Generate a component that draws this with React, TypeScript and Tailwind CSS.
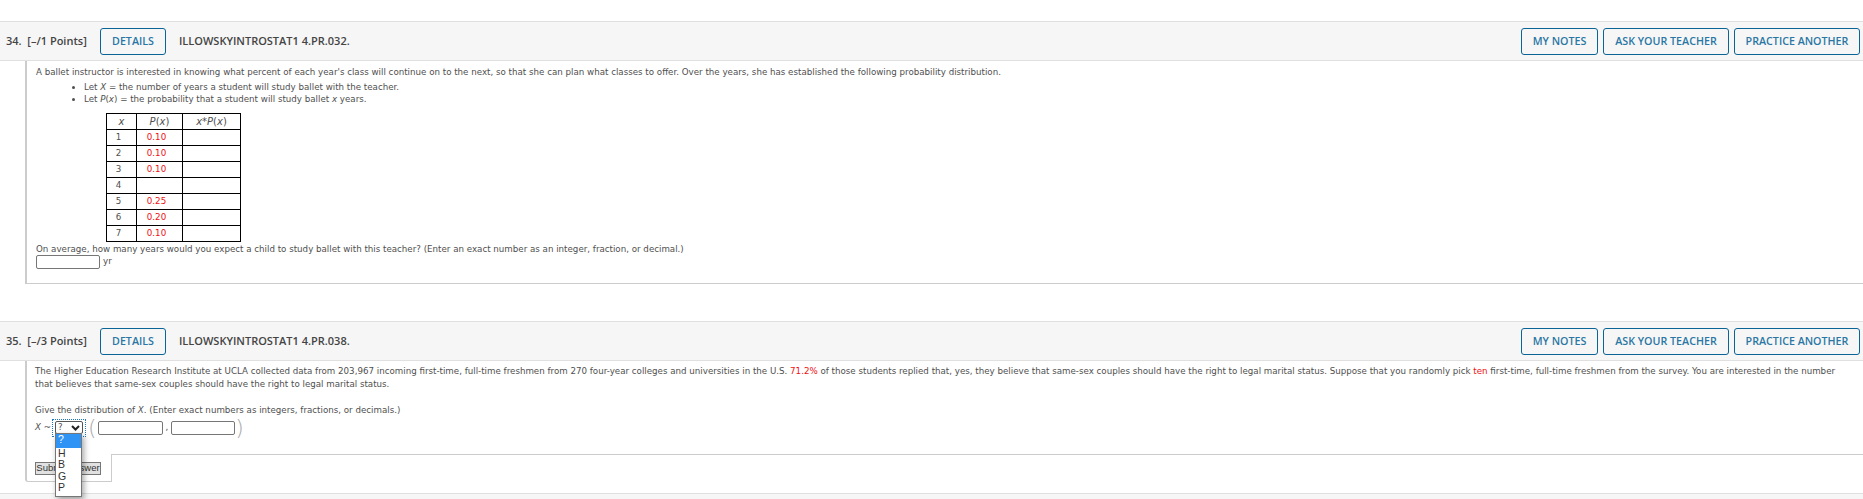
const headFont = "font-['Open_Sans',sans-serif]";

const ROWS = [
  { x: "1", p: "0.10" },
  { x: "2", p: "0.10" },
  { x: "3", p: "0.10" },
  { x: "4", p: "" },
  { x: "5", p: "0.25" },
  { x: "6", p: "0.20" },
  { x: "7", p: "0.10" },
];

const HeadButton = ({ label, className }: { label: string; className: string }) => (
  <button className={`flex h-[27px] items-center justify-center rounded-[3px] border border-[#0a6496] bg-transparent text-[10.7px] font-semibold text-[#2a76a4] ${className}`}>
    {label}
  </button>
);

const QuestionHead = ({ num, points, code }: { num: string; points: string; code: string }) => (
  <div className={`flex h-[40px] items-center border-y border-[#e0e0e0] bg-[#f6f6f6] pl-[6px] pr-[3px] ${headFont}`}>
    <span className="w-[94px] whitespace-pre text-[11px] font-semibold text-[#444444]">
      {num}  [–/{points} Points]
    </span>
    <HeadButton label="DETAILS" className="w-[66px]" />
    <span className="ml-[13px] flex-1 text-[11px] font-semibold text-[#444444]">{code}</span>
    <div className="flex gap-[5px]">
      <HeadButton label="MY NOTES" className="w-[77px]" />
      <HeadButton label="ASK YOUR TEACHER" className="w-[126px]" />
      <HeadButton label="PRACTICE ANOTHER" className="w-[126px]" />
    </div>
  </div>
);

const Blank = ({ w }: { w: string }) => (
  <span className={`inline-block h-[14px] rounded-[2px] border border-[#767676] bg-white ${w}`} />
);

const HeadCell = ({ children, w }: { children: React.ReactNode; w: string }) => (
  <td className={`h-[16px] border border-black p-0 text-center text-[10px] leading-none ${w}`}>{children}</td>
);

const Cell = ({ children }: { children?: React.ReactNode }) => (
  <td className="h-[16px] border border-black p-0 pr-[6px] text-center leading-none">{children}</td>
);

const App = () => {
  return (
    <div className="h-[499px] w-[1863px] overflow-hidden bg-white font-['DejaVu_Sans',sans-serif] text-[8.7px] text-[#4f4f4f]">
      <div className="h-[21px]" />
      <QuestionHead num="34." points="1" code="ILLOWSKYINTROSTAT1 4.PR.032." />

      {/* Question 34 */}
      <div className="ml-[25px] h-[223px] border-b border-l-2 border-[#cccccc] pl-[9px] pt-[5px]">
        <p className="leading-[12px]">
          A ballet instructor is interested in knowing what percent of each year's class will continue on to the next, so that she can plan what classes to offer. Over the years, she has established the following probability distribution.
        </p>
        <ul className="ml-[48px] mt-[4px] list-disc pl-0 leading-[11.5px]">
          <li>Let <i>X</i> = the number of years a student will study ballet with the teacher.</li>
          <li>Let <i>P</i>(<i>x</i>) = the probability that a student will study ballet <i>x</i> years.</li>
        </ul>
        <table className="ml-[70px] mt-[8px] border-collapse">
          <tbody>
            <tr>
              <HeadCell w="w-[30px]"><i>x</i></HeadCell>
              <HeadCell w="w-[46px]"><i>P</i>(<i>x</i>)</HeadCell>
              <HeadCell w="w-[58px]"><i>x</i>*<i>P</i>(<i>x</i>)</HeadCell>
            </tr>
            {ROWS.map((r) => (
              <tr key={r.x}>
                <Cell>{r.x}</Cell>
                <Cell><span className="text-[#ee1111]">{r.p}</span></Cell>
                <Cell />
              </tr>
            ))}
          </tbody>
        </table>
        <p className="mt-[1px] leading-[12px]">
          On average, how many years would you expect a child to study ballet with this teacher? (Enter an exact number as an integer, fraction, or decimal.)
        </p>
        <div className="flex items-center gap-[3px]">
          <Blank w="w-[64px]" />
          <span>yr</span>
        </div>
      </div>

      <div className="h-[37px]" />
      <QuestionHead num="35." points="3" code="ILLOWSKYINTROSTAT1 4.PR.038." />

      {/* Question 35 */}
      <div className="relative ml-[25px] h-[121px]">
        <div className="h-[121px] w-[87px] rounded-bl-[3px] border-b border-l-2 border-[#cccccc]" />
        <div className="absolute left-[10px] top-[4px] w-[1815px]">
          <p className="leading-[12.8px]">
            The Higher Education Research Institute at UCLA collected data from 203,967 incoming first-time, full-time freshmen from 270 four-year colleges and universities in the U.S. <span className="text-[#ee1111]">71.2%</span> of those students replied that, yes, they believe that same-sex couples should have the right to legal marital status. Suppose that you randomly pick <span className="text-[#ee1111]">ten</span> first-time, full-time freshmen from the survey. You are interested in the number that believes that same-sex couples should have the right to legal marital status.
          </p>
          <p className="mt-[13px] leading-[12px]">
            Give the distribution of <i>X</i>. (Enter exact numbers as integers, fractions, or decimals.)
          </p>
          <div className="mt-[3px] flex h-[18px] items-center">
            <span className="w-[17px] whitespace-pre"><i>X</i> ~</span>
            <span className="flex h-[18px] w-[34px] items-center justify-center border border-dotted border-[#1a78c2]">
              <span className="flex h-[13px] w-[28px] items-center justify-between rounded-[2px] border border-[#555555] px-[2px]">
                ?
                <svg width="9" height="6" viewBox="0 0 9 6"><path d="M1 1l3.5 3.5L8 1" fill="none" stroke="#222222" strokeWidth="2" /></svg>
              </span>
            </span>
            <span className="ml-[2px] text-[22px] font-light leading-none text-[#aaaaaa]">(</span>
            <Blank w="w-[65px] ml-[1px]" />
            <span className="mx-[3px]">,</span>
            <Blank w="w-[64px]" />
            <span className="text-[22px] font-light leading-none text-[#aaaaaa]">)</span>
          </div>
        </div>
        <div className="absolute bottom-0 left-[86px] right-0 top-[93px] border-l border-t border-[#cccccc]" />
        <button className="absolute left-[10px] top-[101px] flex h-[13px] w-[66px] items-center justify-center border border-[#777777] bg-[#e1e1e1] font-['Liberation_Sans',sans-serif] text-[9.5px] text-[#333333]">
          Submit Answer
        </button>
        {/* open dropdown of the select */}
        <ul className="absolute left-[30px] top-[72px] z-10 w-[27px] border border-[#767676] bg-white pb-[3px] font-['Liberation_Sans',sans-serif] text-[10.5px] leading-[11.3px] text-[#333333] shadow-[2px_3px_6px_rgba(0,0,0,0.35)]">
          <li className="h-[14px] bg-[#2f93f5] pl-[2px] text-white">?</li>
          <li className="pl-[2px]">H</li>
          <li className="pl-[2px]">B</li>
          <li className="pl-[2px]">G</li>
          <li className="pl-[2px]">P</li>
        </ul>
      </div>
      <div className="h-[11px]" />
      <div className="h-[6px] border-t border-[#e0e0e0] bg-[#f6f6f6]" />
    </div>
  );
};

export default App;
